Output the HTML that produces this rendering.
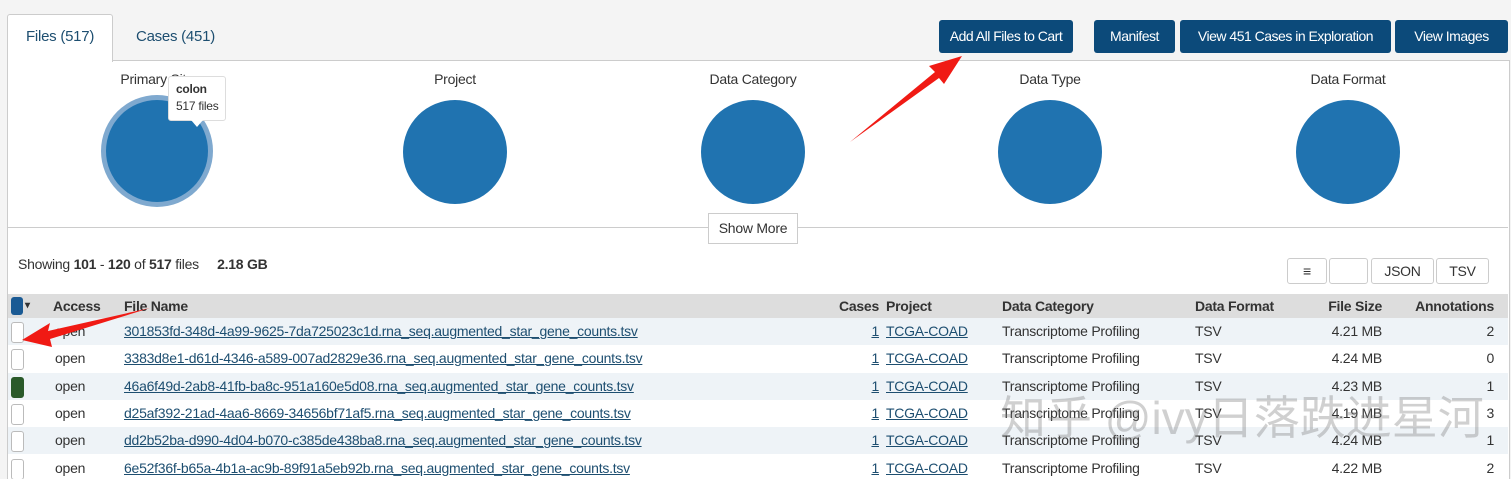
<!DOCTYPE html>
<html style="height:479px;overflow:hidden"><head><meta charset="utf-8"><style>
body{margin:0;width:1511px;height:479px;background:#f4f4f4;font-family:"Liberation Sans",Arial,sans-serif;font-size:14px;color:#333;position:relative;overflow:hidden;letter-spacing:-0.25px}
.abs{position:absolute}
.tab{position:absolute;top:14px;height:46px;line-height:46px;font-size:15px;color:#1d4e70}
.btn{position:absolute;top:20px;height:33px;line-height:33px;background:#0c4a7a;color:#fff;border-radius:3px;text-align:center;font-size:14px;letter-spacing:-0.5px}
.panel{position:absolute;left:7px;top:60px;width:1501px;height:430px;background:#fff;border:1px solid #ccc}
.lbl{position:absolute;top:71px;width:200px;text-align:center;font-size:14px;color:#333}
.circ{position:absolute;width:104px;height:104px;border-radius:50%;background:#2073b0;top:100px}
.row{position:absolute;left:8px;width:1500px;height:27px;line-height:27px}
.row span{position:absolute;white-space:nowrap}
.cb{position:absolute;left:3px;top:4px;width:11px;height:19px;border:1px solid #bbb;border-radius:3px;background:#fff}
a{color:#1d4e70;text-decoration:underline}
.sb{position:absolute;top:258px;height:24px;line-height:24px;border:1px solid #ccc;border-radius:3px;background:#fff;text-align:center;font-size:14px}
</style></head><body>
<div class="panel"></div>
<div class="abs" style="left:7px;top:14px;width:104px;height:47px;background:#fff;border:1px solid #ccc;border-bottom:none;border-radius:3px 3px 0 0"></div>
<div class="tab" style="left:26px">Files (517)</div>
<div class="tab" style="left:136px">Cases (451)</div>
<div class="btn" style="left:939px;width:134px">Add All Files to Cart</div>
<div class="btn" style="left:1094px;width:81px">Manifest</div>
<div class="btn" style="left:1180px;width:211px">View 451 Cases in Exploration</div>
<div class="btn" style="left:1395px;width:113px">View Images</div>

<div class="lbl" style="left:57px">Primary Site</div>
<div class="lbl" style="left:355px">Project</div>
<div class="lbl" style="left:653px">Data Category</div>
<div class="lbl" style="left:950px">Data Type</div>
<div class="lbl" style="left:1248px">Data Format</div>
<div class="circ" style="left:101px;top:95px;width:112px;height:112px;background:#7fa9cf"></div>
<div class="circ" style="left:106px;top:100px;width:102px;height:102px"></div>
<div class="circ" style="left:403px"></div>
<div class="circ" style="left:701px"></div>
<div class="circ" style="left:998px"></div>
<div class="circ" style="left:1296px"></div>
<div class="abs" style="left:168px;top:76px;width:58px;height:45px;background:#fff;border:1px solid #ddd;border-radius:3px;font-size:12px;line-height:17px;padding:4px 0 0 7px;box-sizing:border-box"><b>colon</b><br>517 files</div>
<div class="abs" style="left:191px;top:120px;width:0;height:0;border-left:6px solid transparent;border-right:6px solid transparent;border-top:7px solid #fff"></div>
<div class="abs" style="left:8px;top:227px;width:1500px;height:1px;background:#ccc"></div>
<div class="abs" style="left:708px;top:213px;width:88px;height:29px;line-height:29px;background:#fff;border:1px solid #ccc;text-align:center;color:#333">Show More</div>

<div class="abs" style="left:18px;top:256px">Showing <b>101</b> - <b>120</b> of <b>517</b> files &nbsp;&nbsp;&nbsp; <b>2.18 GB</b></div>
<div class="sb" style="left:1287px;width:38px">&#8801;</div>
<div class="sb" style="left:1329px;width:37px"></div>
<div class="sb" style="left:1371px;width:61px">JSON</div>
<div class="sb" style="left:1436px;width:51px">TSV</div>

<div class="row" style="top:294px;height:24px;line-height:24px;background:#ddd;font-weight:bold">
<div class="abs" style="left:3px;top:3px;width:12px;height:18px;background:#1a5a94;border-radius:3px"></div><span style="left:17px;font-size:10px">&#9662;</span>
<span style="left:45px">Access</span><span style="left:116px">File Name</span><span style="right:629px">Cases</span><span style="left:878px">Project</span><span style="left:994px">Data Category</span><span style="left:1187px">Data Format</span><span style="right:126px">File Size</span><span style="right:14px">Annotations</span></div>

<div id="rows"></div>
<script>
var d=[["301853fd-348d-4a99-9625-7da725023c1d","4.21 MB","2"],["3383d8e1-d61d-4346-a589-007ad2829e36","4.24 MB","0"],["46a6f49d-2ab8-41fb-ba8c-951a160e5d08","4.23 MB","1"],["d25af392-21ad-4aa6-8669-34656bf71af5","4.19 MB","3"],["dd2b52ba-d990-4d04-b070-c385de438ba8","4.24 MB","1"],["6e52f36f-b65a-4b1a-ac9b-89f91a5eb92b","4.22 MB","2"]];
var h="";d.forEach(function(r,i){var t=318+i*27.3;h+='<div class="row" style="top:'+t+'px;background:'+(i%2?'#fff':'#eef3f7')+'"><div class="cb"'+(i==2?' style="background:#2a5a2a;border-color:#2a5a2a"':'')+'></div><span style="left:47px">open</span><span style="left:116px"><a>'+r[0]+'.rna_seq.augmented_star_gene_counts.tsv</a></span><span style="right:629px"><a>1</a></span><span style="left:878px"><a>TCGA-COAD</a></span><span style="left:994px">Transcriptome Profiling</span><span style="left:1187px">TSV</span><span style="right:126px">'+r[1]+'</span><span style="right:14px">'+r[2]+'</span></div>'});
document.getElementById("rows").innerHTML=h;
</script>
<div class="abs" style="left:1000px;top:382px;font-size:46px;color:rgba(120,120,120,0.35);font-family:'Liberation Sans','Noto Sans CJK SC',sans-serif;white-space:nowrap;letter-spacing:0">知乎 @ivy日落跌进星河</div>
<svg class="abs" style="left:0;top:0" width="1511" height="479">
<path d="M850 142 L935 72 L929 66 L962 56 L944 84 L939 78 Z" fill="#f01a14"/>
<path d="M150 308 L48 331 L50 323 L22 340 L52 347 L50 339 Z" fill="#f01a14"/>
</svg>
</body></html>
